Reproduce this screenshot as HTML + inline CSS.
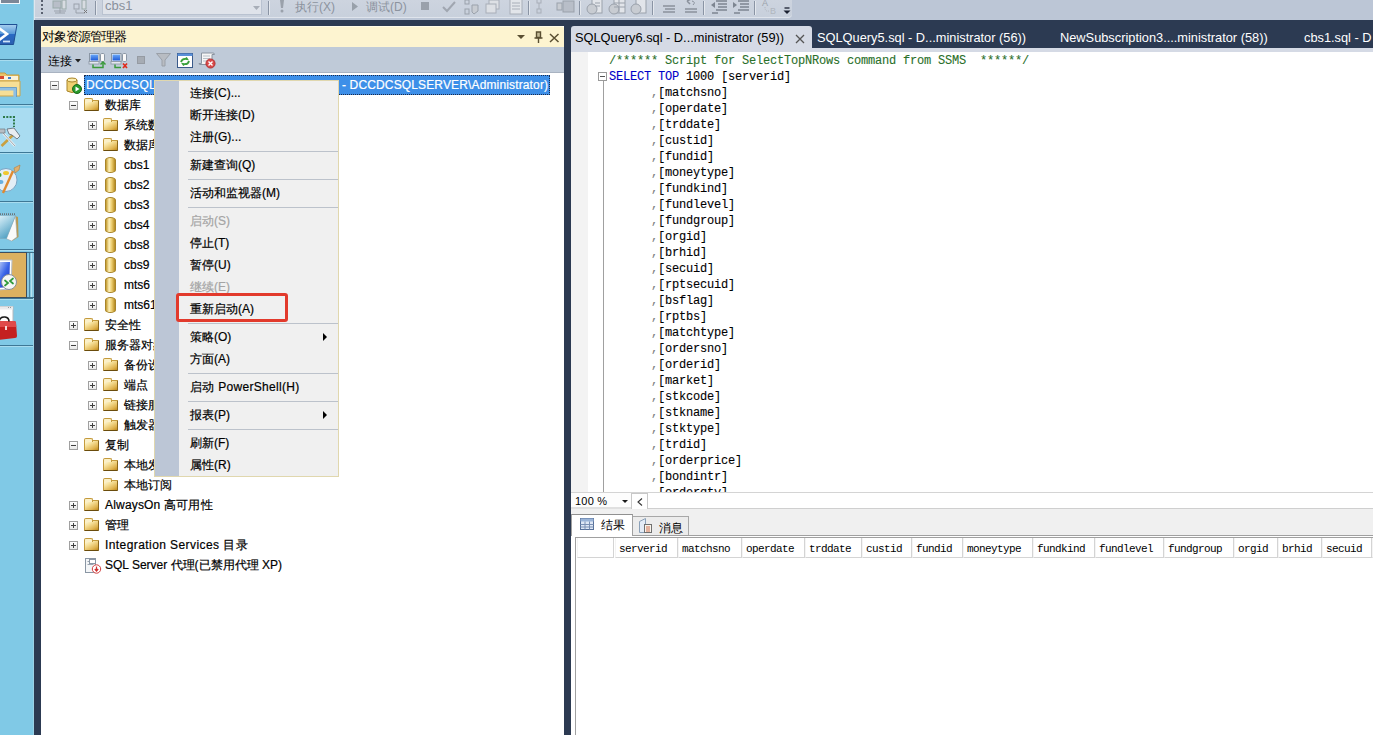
<!DOCTYPE html>
<html><head><meta charset="utf-8">
<style>
*{box-sizing:border-box;margin:0;padding:0}
html,body{width:1373px;height:735px;overflow:hidden;background:#2c3a52;font-family:"Liberation Sans",sans-serif;font-size:12px;color:#000}
.a{position:absolute}
svg{position:absolute;overflow:visible}
#taskbar{left:0;top:0;width:34px;height:735px;background:#80c9e6}
.tsep{position:absolute;left:0;width:34px;height:2px;background:#3e7896;border-bottom:1px solid #a8dcef}
#tray{left:34px;top:0;width:1339px;height:20px;background:#bcc6d6;border-left:1px solid #dfe6ee}
#tb{left:35px;top:0;width:757px;height:18px;background:linear-gradient(#cdd4df,#c8d0dc);border-bottom:1px solid #dfe4ec;border-radius:0 0 4px 0}
.tsp{position:absolute;top:1px;width:2px;height:14px;background:#8a94a4;border-right:1px solid #e4e8ee}
.gt{position:absolute;top:-1px;color:#8c939e;font-size:12px;white-space:nowrap}
#oe{left:41px;top:26px;width:523px;height:709px;background:#fff;overflow:hidden}
#oetitle{left:0;top:0;width:523px;height:21px;background:#fdf4d0;border-top:1px solid #fffbe8;border-radius:2px 2px 0 0}
#oetb{left:0;top:21px;width:523px;height:26px;background:#bfcad8;border-bottom:1px solid #a9b3c1}
#ed{left:571px;top:26px;width:802px;height:709px;overflow:hidden}
.tabtxt{color:#fff;top:4px;font-size:12.8px;white-space:nowrap}
.row{position:absolute;height:20px;line-height:20px;white-space:nowrap;font-size:12px;-webkit-text-stroke:0.2px}
.exp{position:absolute;width:9px;height:9px;border:1px solid #a0a0a0;background:linear-gradient(#fff,#e8e8e8)}
.exp:before{content:"";position:absolute;left:1px;top:3px;width:5px;height:1px;background:#404040}
.exp.p:after{content:"";position:absolute;left:3px;top:1px;width:1px;height:5px;background:#404040}
.fold{position:absolute;width:15px;height:11px;background:linear-gradient(150deg,#fffbe4 0%,#f6e09a 35%,#e0b450 75%,#c08a20 100%);border:1px solid #c49a3c;border-bottom-color:#6a4c0c;border-right-color:#8a661a;border-radius:1px}
.fold:before{content:"";position:absolute;left:-1px;top:-3px;width:7px;height:3px;background:#fbf0c8;border:1px solid #c49a3c;border-bottom:none;border-radius:2px 2px 0 0}
.db{position:absolute;width:11px;height:16px;border-radius:5.5px/3px;background:linear-gradient(90deg,#c39a2c,#fdf0b8 35%,#ebcb6c 65%,#b58a20);border:1px solid #a8842a}
.agent{position:absolute;width:16px;height:16px}
.mi{position:absolute;left:35px;height:22px;line-height:22px;white-space:nowrap;font-size:12px;-webkit-text-stroke:0.2px}
.mi.d{color:#a4a4a4}
.sep{position:absolute;left:33px;width:150px;height:1px;background:#bcc2cb}
.code{position:absolute;left:38px;font-family:"Liberation Mono",monospace;font-size:12px;line-height:16px;height:16px;white-space:pre;letter-spacing:-0.2px;-webkit-text-stroke:0.1px}
.kw{color:#0000c8}.cm{color:#2a702a}.gr{color:#808080}
.gh{position:absolute;top:0px;height:20px;line-height:23px;font-family:"Liberation Mono",monospace;font-size:11px;letter-spacing:-0.6px;border-left:1px solid #f4f4f4;border-right:1px solid #d4d4d4;border-bottom:1px solid #d4d4d4;padding-left:3px;white-space:nowrap;background:#fff;overflow:hidden;color:#000}
</style></head><body>

<div id="taskbar" class="a">
 <div class="a" style="left:0;top:0;width:20px;height:4px;background:#7d8796;border:1px solid #f4f8fb;border-top:none"></div>
 <div class="tsep" style="top:59px"></div>
 <div class="a" style="left:0;top:108px;width:34px;height:45px;background:#a9dcf1"></div>
 <div class="tsep" style="top:104px"></div>
 <div class="tsep" style="top:152px"></div>
 <div class="tsep" style="top:201px"></div>
 <div class="tsep" style="top:249px"></div>
 <div class="tsep" style="top:298px"></div>
 <div class="tsep" style="top:345px"></div>
 <div class="a" style="left:33px;top:0;width:1px;height:735px;background:#9cd2e6"></div>
 <!-- powershell -->
 <svg style="left:0;top:24px" width="20" height="22"><defs><linearGradient id="ps" x1="0" y1="0" x2="0" y2="1"><stop offset="0" stop-color="#a8d0f0"/><stop offset="0.45" stop-color="#5a9ad8"/><stop offset="0.5" stop-color="#2a6ac4"/><stop offset="1" stop-color="#2a5fb0"/></linearGradient></defs><path d="M-3 0.5 L17 0.5 L13.5 20.5 L-3 20.5 Z" fill="url(#ps)" stroke="#1e4f94"/><path d="M-1 4 L7 10 L-1 16" stroke="#fff" stroke-width="2.6" fill="none"/><path d="M3 17.5 L10 17.5" stroke="#cfe4f8" stroke-width="1.8"/></svg>
 <!-- explorer folder -->
 <svg style="left:0;top:71px" width="22" height="29"><path d="M-2 2 L5 2 L7 4 L19 4 L19 24 L-2 24Z" fill="#e9c36a" stroke="#c79d3e"/><rect x="-1" y="5" width="19" height="4" fill="#fbf3dc"/><rect x="0" y="5" width="4" height="3" fill="#d84a30"/><rect x="8" y="6" width="3" height="2" fill="#3a7ed0"/><path d="M-2 10 L20 10 L20 25 L-2 25Z" fill="#f6df96" stroke="#c9a44a"/><path d="M-2 18 L15 18 L15 26" stroke="#8ec0e4" stroke-width="3.2" fill="none"/><path d="M-2 16.5 L16.5 16.5 L16.5 26" stroke="#5a94c4" stroke-width="0.8" fill="none"/></svg>
 <!-- tools -->
 <svg style="left:0;top:114px" width="24" height="34"><path d="M3 3 L14 3 L14 13" stroke="#2e7a4a" stroke-width="2" stroke-dasharray="2,1.3" fill="none"/><path d="M1.5 32 L13 21" stroke="#c9a040" stroke-width="2.6"/><path d="M3 19 L15 32" stroke="#eef2f4" stroke-width="2.4"/><path d="M3 19 L15 32" stroke="#6a7480" stroke-width="0.6"/><path d="M-1 15 L5 15 L5 19 L-1 19Z" fill="#b8bec4" stroke="#707880" stroke-width="0.7"/><path d="M7 15 L14 14 L20 22 L17 25 L12 21 L9 20Z" fill="#e8ecf0" stroke="#5a6470" stroke-width="0.8"/></svg>
 <!-- paint -->
 <svg style="left:0;top:163px" width="22" height="33"><ellipse cx="6" cy="17" rx="11" ry="11.5" fill="#e4eef6" stroke="#7aa4c4"/><ellipse cx="6" cy="10" rx="3" ry="2" fill="#f0c830"/><ellipse cx="0" cy="12" rx="1.5" ry="2" fill="#40a040"/><ellipse cx="1" cy="19" rx="2.5" ry="2" fill="#6ab0e0"/><path d="M13 8 L3 30" stroke="#e08a30" stroke-width="2.4"/><path d="M14 5 L20 2 L19 7 L15 10Z" fill="#e0b070" stroke="#b08040" stroke-width="0.6"/></svg>
 <!-- notepad -->
 <svg style="left:0;top:211px" width="22" height="32"><defs><linearGradient id="np" x1="0" y1="0" x2="0.6" y2="1"><stop offset="0" stop-color="#e6f4fa"/><stop offset="0.4" stop-color="#a8d4e6"/><stop offset="1" stop-color="#4a9cc0"/></linearGradient></defs><path d="M15 5 L18 6 L18.5 26 L12 30Z" fill="#b89a50"/><path d="M15.5 4.5 L17 26 L11.5 30 L6 27.5Z" fill="#fafafa" stroke="#9aa4aa" stroke-width="0.6"/><path d="M-3 4.5 L15.5 4.5 L6.5 27.5 L-3 27.5Z" fill="url(#np)" stroke="#7aa8bc" stroke-width="0.6"/><path d="M-2 3.2 L15 3.2" stroke="#6a747c" stroke-width="1.8" stroke-dasharray="1,1"/></svg>
 <!-- rdp highlighted -->
 <div class="a" style="left:0;top:252px;width:27px;height:46px;background:#dcb160;border:1px solid #3e4e5e;border-left:none"></div>
 <div class="a" style="left:27px;top:252px;width:7px;height:46px;background:#88c8e2;border-top:1px solid #3e6e88;border-bottom:1px solid #3e6e88"></div>
 <div class="a" style="left:29px;top:253px;width:1px;height:44px;background:#4a86a4"></div>
 <div class="a" style="left:31px;top:253px;width:1px;height:44px;background:#b8e2f2"></div>
 <svg style="left:0;top:259px" width="22" height="34"><path d="M-3 1 L12 1 L11 30 L-3 31Z" fill="#fff" stroke="#b8c0cc"/><defs><linearGradient id="scr" x1="0" y1="0" x2="1" y2="1"><stop offset="0" stop-color="#c8d8f8"/><stop offset="0.5" stop-color="#3a64e8"/><stop offset="1" stop-color="#1a2ab0"/></linearGradient></defs><path d="M-3 3 L10 3 L9 28 L-3 29Z" fill="url(#scr)"/><circle cx="9" cy="23" r="7.5" fill="#f6f6f6" stroke="#8a9098"/><path d="M5 21.5 L8 24 L5 26.5 M13 19.5 L10 22 L13 24.5" stroke="#2e9a3a" stroke-width="1.7" stroke-linecap="round" fill="none"/></svg>
 <!-- toolbox -->
 <svg style="left:0;top:306px" width="22" height="36"><rect x="-2" y="0.5" width="15" height="16" fill="#fff" stroke="#b4b8bc"/><rect x="-2" y="0.5" width="15" height="3" fill="#e8eaec"/><path d="M8 1.5 L9 1.5 M10 1.5 L11 1.5" stroke="#999"/><path d="M-3 15 L14 15 Q16 15 16 17 L17 30 Q17 32 15 32 L-3 34Z" fill="#c42020"/><path d="M-3 15 L14 15 Q16 15 16 17 L16.3 21 L-3 21Z" fill="#e04a4a"/><rect x="5" y="20" width="2" height="4" fill="#f4d8d8"/><path d="M-1 15.5 Q0 10.5 5 11 Q9 11.5 9 15.5" stroke="#1a1a1a" stroke-width="1.6" fill="none"/></svg>
</div>

<div id="tray" class="a"></div>
<div id="tb" class="a">
 <div class="a" style="left:6px;top:0px;width:2px;height:14px;background:repeating-linear-gradient(#5a6170 0 2px,transparent 2px 4px)"></div>
 <svg style="left:17px;top:-1px" width="16" height="16"><rect x="1" y="2" width="8" height="7" fill="#b8bec8" stroke="#9aa"/><rect x="10" y="1" width="4" height="9" fill="#d8dce2" stroke="#9aa"/><path d="M2 12 L14 12 M8 9 L8 14 M3 14 L13 14" stroke="#9aa1ab"/></svg>
 <svg style="left:38px;top:-1px" width="16" height="16"><rect x="1" y="5" width="5" height="5" fill="none" stroke="#9aa1ab"/><rect x="9" y="1" width="4" height="9" fill="#d8dce2" stroke="#9aa"/><path d="M3 11 L3 14 L12 14" stroke="#9aa1ab" fill="none"/><path d="M11 11 L14 14 M14 11 L11 14" stroke="#777"/></svg>
 <div class="tsp" style="left:60px"></div>
 <div class="a" style="left:67px;top:-1px;width:160px;height:16px;border:1px solid #b9c2d0;background:#dfe3ea"><span class="a" style="left:2px;top:-2px;color:#8a919c;font-size:13px">cbs1</span><svg style="left:150px;top:6px" width="7" height="4"><path d="M0 0 L7 0 L3.5 4Z" fill="#a8aeb8"/></svg></div>
 <div class="tsp" style="left:233px"></div>
 <svg style="left:243px;top:-1px" width="8" height="14"><path d="M2 1 L6 1 L5 9 L3 9Z" fill="#9aa1ab"/><circle cx="4" cy="12" r="1.5" fill="#9aa1ab"/></svg>
 <span class="gt" style="left:260px">执行(X)</span>
 <svg style="left:316px;top:2px" width="8" height="10"><path d="M1 0 L7 4.5 L1 9Z" fill="#98a0aa"/></svg>
 <span class="gt" style="left:331px">调试(D)</span>
 <svg style="left:385px;top:1px" width="10" height="10"><rect x="1" y="1" width="8" height="8" fill="#9aa1ab"/></svg>
 <svg style="left:407px;top:1px" width="14" height="12"><path d="M1 6 L5 10 L13 1" stroke="#a0a6b0" stroke-width="2" fill="none"/></svg>
 <svg style="left:429px;top:-1px" width="16" height="16"><rect x="1" y="1" width="4" height="4" fill="none" stroke="#9aa1ab"/><rect x="1" y="10" width="4" height="5" fill="none" stroke="#9aa1ab"/><path d="M8 6 L14 6 L14 12 L10 15 L8 13Z" fill="#c8ccd2" stroke="#9aa1ab"/></svg>
 <svg style="left:450px;top:-1px" width="16" height="16"><rect x="4" y="1" width="10" height="9" fill="#dde0e5" stroke="#a8aeb8"/><rect x="1" y="5" width="10" height="9" fill="#dde0e5" stroke="#a8aeb8"/></svg>
 <svg style="left:473px;top:-2px" width="16" height="17"><rect x="2" y="1" width="12" height="15" fill="#e2e5ea" stroke="#a8aeb8"/><path d="M4 5 L12 5 M4 8 L12 8 M4 11 L12 11" stroke="#a8aeb8"/></svg>
 <div class="tsp" style="left:493px"></div>
 <svg style="left:501px;top:-2px" width="16" height="17"><rect x="1" y="1" width="4" height="4" fill="none" stroke="#a8aeb8"/><rect x="1" y="11" width="4" height="4" fill="none" stroke="#a8aeb8"/><path d="M3 5 L3 11" stroke="#a8aeb8"/></svg>
 <svg style="left:521px;top:-2px" width="20" height="17"><rect x="1" y="5" width="5" height="7" fill="#c8ccd2" stroke="#9aa1ab"/><rect x="7" y="3" width="11" height="11" fill="#b8bec8" stroke="#9aa1ab"/></svg>
 <div class="tsp" style="left:544px"></div>
 <svg style="left:551px;top:-2px" width="18" height="17"><rect x="6" y="1" width="10" height="14" fill="#e2e5ea" stroke="#9aa1ab"/><circle cx="6" cy="11" r="5" fill="#c8ccd2" stroke="#9aa1ab"/><path d="M9 5 L14 5 M9 8 L14 8" stroke="#9aa1ab"/></svg>
 <svg style="left:573px;top:-2px" width="18" height="17"><rect x="6" y="1" width="11" height="14" fill="#e2e5ea" stroke="#9aa1ab"/><circle cx="6" cy="11" r="5" fill="#c8ccd2" stroke="#9aa1ab"/><path d="M6 5 L17 5 M6 9 L17 9 M11 1 L11 15" stroke="#9aa1ab"/></svg>
 <svg style="left:595px;top:-2px" width="18" height="17"><rect x="6" y="1" width="10" height="14" fill="#e2e5ea" stroke="#9aa1ab"/><circle cx="6" cy="11" r="5" fill="#c8ccd2" stroke="#9aa1ab"/></svg>
 <div class="tsp" style="left:617px"></div>
 <svg style="left:625px;top:-2px" width="18" height="17"><path d="M3 1 L15 1 M3 8 L15 8 M5 11 L15 11 M3 14 L15 14" stroke="#8a919c" stroke-width="1.5"/></svg>
 <svg style="left:647px;top:-2px" width="18" height="17"><path d="M5 3 L9 1 M5 3 L8 6 M3 11 L15 11 M3 14 L15 14" stroke="#8a919c" stroke-width="1.5" fill="none"/><path d="M10 3 Q14 4 11 7" stroke="#8a919c" fill="none"/></svg>
 <div class="tsp" style="left:668px"></div>
 <svg style="left:675px;top:-1px" width="18" height="16"><path d="M6 2 L17 2 M8 5 L17 5 M8 8 L17 8 M6 11 L17 11 M2 14 L8 14" stroke="#7d8591" stroke-width="1.5"/><path d="M1 6 L5 3 L5 9Z" fill="#7d8591"/></svg>
 <svg style="left:697px;top:-1px" width="18" height="16"><path d="M6 2 L17 2 M8 5 L17 5 M8 8 L17 8 M6 11 L17 11 M2 14 L8 14" stroke="#7d8591" stroke-width="1.5"/><path d="M5 6 L1 3 L1 9Z" fill="#7d8591"/></svg>
 <div class="tsp" style="left:719px"></div>
 <svg style="left:726px;top:-2px" width="18" height="17"><text x="1" y="8" font-size="9" fill="#9aa1ab" font-family="Liberation Sans">A</text><text x="9" y="16" font-size="9" fill="#b0b6be" font-family="Liberation Sans">B</text><path d="M4 9 Q4 14 8 13" stroke="#b0b6be" stroke-dasharray="1,1" fill="none"/></svg>
 <svg style="left:748px;top:7px" width="8" height="8"><path d="M1.5 1 L6.5 1" stroke="#1a2030" stroke-width="1.3"/><path d="M0.5 3.5 L7.5 3.5 L4 7Z" fill="#1a2030"/></svg>
</div>

<div id="oe" class="a">
  <div id="oetitle" class="a">
    <span class="a" style="left:1px;top:1px;font-size:13px;letter-spacing:-1px">对象资源管理器</span>
    <svg style="left:476px;top:8px" width="8" height="4"><path d="M0 0 L8 0 L4 4Z" fill="#5a4f32"/></svg>
    <svg style="left:493px;top:4px" width="10" height="13"><path d="M2.5 1 L6.5 1 L6.5 6.5 L2.5 6.5Z" stroke="#5a4f32" stroke-width="1.4" fill="#5a4f32" fill-opacity="0.35"/><path d="M0.5 7 L8.5 7 M4.5 7 L4.5 12" stroke="#5a4f32" stroke-width="1.4" fill="none"/></svg>
    <svg style="left:508px;top:6px" width="11" height="10"><path d="M1 1 L9.5 9 M9.5 1 L1 9" stroke="#5a4f32" stroke-width="1.5"/></svg>
  </div>
  <div id="oetb" class="a">
    <span class="a" style="left:7px;top:6px;font-size:12px">连接</span>
    <svg style="left:34px;top:12px" width="6" height="4"><path d="M0 0 L6 0 L3 3.5Z" fill="#222"/></svg>
    <svg style="left:47px;top:5px" width="18" height="18"><defs><linearGradient id="scrn" x1="0" y1="0" x2="0" y2="1"><stop offset="0" stop-color="#6aa8f8"/><stop offset="1" stop-color="#1e5ad8"/></linearGradient></defs><rect x="1.5" y="1.5" width="9.5" height="8" fill="#f0f4f8" stroke="#8a96a4"/><rect x="2.5" y="2.5" width="7.5" height="6" fill="url(#scrn)"/><rect x="1" y="9.5" width="10" height="2.5" fill="#e4e8ee" stroke="#8a96a4" stroke-width="0.8"/><rect x="12.5" y="1.5" width="4" height="8" rx="1.2" fill="#fafafa" stroke="#8a96a4"/><path d="M5 12.5 L5 15.5 L15 15.5 L15 10" stroke="#3a9a3a" stroke-width="1.5" fill="none"/><path d="M12.5 12.5 L15 10 L17.5 12.5" stroke="#3a9a3a" stroke-width="1.5" fill="none"/></svg>
    <svg style="left:69px;top:5px" width="18" height="18"><rect x="1.5" y="1.5" width="9.5" height="8" fill="#f0f4f8" stroke="#8a96a4"/><rect x="2.5" y="2.5" width="7.5" height="6" fill="url(#scrn)"/><rect x="1" y="9.5" width="10" height="2.5" fill="#e4e8ee" stroke="#8a96a4" stroke-width="0.8"/><rect x="12.5" y="1.5" width="4" height="8" rx="1.2" fill="#fafafa" stroke="#8a96a4"/><path d="M5 12.5 L5 15.5 L11 15.5" stroke="#3a9a3a" stroke-width="1.5" fill="none"/><path d="M13 11.5 L17 16 M17 11.5 L13 16" stroke="#e02a1a" stroke-width="1.7"/></svg>
    <div class="a" style="left:96px;top:9px;width:8px;height:8px;background:#a6acb4;border:1px solid #959ba3"></div>
    <svg style="left:115px;top:6px" width="15" height="14"><path d="M0.5 0.5 L14.5 0.5 L9 7 L9 13 L6 13 L6 7Z" fill="#b8bcc2" stroke="#9aa0a8"/></svg>
    <svg style="left:136px;top:6px" width="17" height="16"><rect x="0.5" y="0.5" width="15" height="14" fill="#fff" stroke="#3a5a8a"/><rect x="0.5" y="0.5" width="15" height="2.5" fill="#5a90d8"/><path d="M4 9 Q5 5 10 6 L9 4.5 M12 8 Q11 12 6 11 L7 12.5" stroke="#3aa03a" stroke-width="1.8" fill="none"/></svg>
    <svg style="left:157px;top:4px" width="18" height="18"><path d="M3.5 2 L15 2 Q16.5 2 16.5 3.5 L14 3.5 L14 13.5 L2 13.5 Q1 13.5 1 12.5 L3.5 12.5Z" fill="#f6f6f6" stroke="#8a94a0"/><path d="M5 5 L12 5 M5 7.5 L12 7.5 M5 10 L10 10" stroke="#b8c0c8"/><circle cx="12.5" cy="12.5" r="4.6" fill="#d84a4a" stroke="#a82828" stroke-width="0.8"/><path d="M10.5 10.5 L14.5 14.5 M14.5 10.5 L10.5 14.5" stroke="#fff" stroke-width="1.4"/></svg>
  </div>
  <div class="a" style="left:43px;top:49px;width:466px;height:20px;background:#3d8fe8;border:1px dotted #1a2a4a"></div>
  <div class="row" style="left:45px;top:49px;color:#fff;letter-spacing:0.35px">DCCDCSQLSERVER (SQL Server 11.0.21</div>
  <div class="row" style="left:301px;top:49px;color:#fff;letter-spacing:0.14px">- DCCDCSQLSERVER\Administrator)</div>
  <svg style="left:25px;top:51px" width="16" height="17"><path d="M1 3 Q6 0 11 3 L11 14 Q6 17 1 14Z" fill="#f0d070" stroke="#a8842a"/><ellipse cx="6" cy="3" rx="5" ry="2" fill="#fbeeb0" stroke="#a8842a"/><circle cx="11" cy="12" r="4.5" fill="#2a9a2a" stroke="#1a6a1a"/><path d="M9.5 9.5 L13.5 12 L9.5 14.5Z" fill="#fff"/></svg>
<div class="exp" style="left:9px;top:55px"></div>
<div class="exp" style="left:28px;top:75px"></div>
<div class="fold" style="left:43px;top:74px"></div>
<div class="row" style="left:64px;top:69px">数据库</div>
<div class="exp p" style="left:47px;top:95px"></div>
<div class="fold" style="left:62px;top:94px"></div>
<div class="row" style="left:83px;top:89px">系统数据库</div>
<div class="exp p" style="left:47px;top:115px"></div>
<div class="fold" style="left:62px;top:114px"></div>
<div class="row" style="left:83px;top:109px">数据库快照</div>
<div class="exp p" style="left:47px;top:135px"></div>
<div class="db" style="left:64px;top:131px"></div>
<div class="row" style="left:83px;top:129px">cbs1</div>
<div class="exp p" style="left:47px;top:155px"></div>
<div class="db" style="left:64px;top:151px"></div>
<div class="row" style="left:83px;top:149px">cbs2</div>
<div class="exp p" style="left:47px;top:175px"></div>
<div class="db" style="left:64px;top:171px"></div>
<div class="row" style="left:83px;top:169px">cbs3</div>
<div class="exp p" style="left:47px;top:195px"></div>
<div class="db" style="left:64px;top:191px"></div>
<div class="row" style="left:83px;top:189px">cbs4</div>
<div class="exp p" style="left:47px;top:215px"></div>
<div class="db" style="left:64px;top:211px"></div>
<div class="row" style="left:83px;top:209px">cbs8</div>
<div class="exp p" style="left:47px;top:235px"></div>
<div class="db" style="left:64px;top:231px"></div>
<div class="row" style="left:83px;top:229px">cbs9</div>
<div class="exp p" style="left:47px;top:255px"></div>
<div class="db" style="left:64px;top:251px"></div>
<div class="row" style="left:83px;top:249px">mts6</div>
<div class="exp p" style="left:47px;top:275px"></div>
<div class="db" style="left:64px;top:271px"></div>
<div class="row" style="left:83px;top:269px">mts61</div>
<div class="exp p" style="left:28px;top:295px"></div>
<div class="fold" style="left:43px;top:294px"></div>
<div class="row" style="left:64px;top:289px">安全性</div>
<div class="exp" style="left:28px;top:315px"></div>
<div class="fold" style="left:43px;top:314px"></div>
<div class="row" style="left:64px;top:309px">服务器对象</div>
<div class="exp p" style="left:47px;top:335px"></div>
<div class="fold" style="left:62px;top:334px"></div>
<div class="row" style="left:83px;top:329px">备份设备</div>
<div class="exp p" style="left:47px;top:355px"></div>
<div class="fold" style="left:62px;top:354px"></div>
<div class="row" style="left:83px;top:349px">端点</div>
<div class="exp p" style="left:47px;top:375px"></div>
<div class="fold" style="left:62px;top:374px"></div>
<div class="row" style="left:83px;top:369px">链接服务器</div>
<div class="exp p" style="left:47px;top:395px"></div>
<div class="fold" style="left:62px;top:394px"></div>
<div class="row" style="left:83px;top:389px">触发器</div>
<div class="exp" style="left:28px;top:415px"></div>
<div class="fold" style="left:43px;top:414px"></div>
<div class="row" style="left:64px;top:409px">复制</div>
<div class="fold" style="left:62px;top:434px"></div>
<div class="row" style="left:83px;top:429px">本地发布</div>
<div class="fold" style="left:62px;top:454px"></div>
<div class="row" style="left:83px;top:449px">本地订阅</div>
<div class="exp p" style="left:28px;top:475px"></div>
<div class="fold" style="left:43px;top:474px"></div>
<div class="row" style="left:64px;top:469px;letter-spacing:0.18px">AlwaysOn 高可用性</div>
<div class="exp p" style="left:28px;top:495px"></div>
<div class="fold" style="left:43px;top:494px"></div>
<div class="row" style="left:64px;top:489px">管理</div>
<div class="exp p" style="left:28px;top:515px"></div>
<div class="fold" style="left:43px;top:514px"></div>
<div class="row" style="left:64px;top:509px;letter-spacing:0.42px">Integration Services 目录</div>
<svg style="left:44px;top:532px" width="17" height="16"><rect x="0.5" y="0.5" width="10" height="14" fill="#f4f6f8" stroke="#8a96a4"/><path d="M2.5 3.5 L8.5 3.5 M2.5 6.5 L8.5 6.5" stroke="#9aa4b0"/><rect x="4.5" y="1.5" width="6" height="4" fill="#fff" stroke="#8a96a4"/><circle cx="11.5" cy="11" r="4.2" fill="#fff" stroke="#d04040"/><path d="M11.5 8.5 L11.5 12.5 M9.8 11 L11.5 13 L13.2 11" stroke="#d03030" stroke-width="1.2" fill="none"/></svg>
<div class="row" style="left:64px;top:529px">SQL Server 代理(已禁用代理 XP)</div>
</div>

<div class="a" style="left:154px;top:80px;width:185px;height:397px;background:#f0f0f0;border:1px solid #e0d7ae">
  <div class="a" style="left:0;top:0;width:24px;height:395px;background:#bcc6d6"></div>
<div class="mi" style="top:1px">连接(C)...</div>
<div class="mi" style="top:23px">断开连接(D)</div>
<div class="mi" style="top:45px">注册(G)...</div>
<div class="sep" style="top:70px"></div>
<div class="mi" style="top:73px">新建查询(Q)</div>
<div class="sep" style="top:98px"></div>
<div class="mi" style="top:101px">活动和监视器(M)</div>
<div class="sep" style="top:126px"></div>
<div class="mi d" style="top:129px">启动(S)</div>
<div class="mi" style="top:151px">停止(T)</div>
<div class="mi" style="top:173px">暂停(U)</div>
<div class="mi d" style="top:195px">继续(E)</div>
<div class="mi" style="top:217px">重新启动(A)</div>
<div class="sep" style="top:242px"></div>
<div class="mi" style="top:245px">策略(O)</div>
<svg style="left:168px;top:252px" width="5" height="8"><path d="M0 0 L4 4 L0 8Z" fill="#000"/></svg>
<div class="mi" style="top:267px">方面(A)</div>
<div class="sep" style="top:292px"></div>
<div class="mi" style="top:295px;letter-spacing:0.3px">启动 PowerShell(H)</div>
<div class="sep" style="top:320px"></div>
<div class="mi" style="top:323px">报表(P)</div>
<svg style="left:168px;top:330px" width="5" height="8"><path d="M0 0 L4 4 L0 8Z" fill="#000"/></svg>
<div class="sep" style="top:348px"></div>
<div class="mi" style="top:351px">刷新(F)</div>
<div class="mi" style="top:373px">属性(R)</div>
  <div class="a" style="left:21px;top:212px;width:112px;height:29px;border:3px solid #e23a2c;border-radius:3px"></div>
</div>

<div id="ed" class="a">
  <div class="a" style="left:0;top:0;width:241px;height:26px;background:#d5dae5;border-radius:3px 3px 0 0"></div>
  <span class="a" style="left:4px;top:4px;font-size:12.8px;white-space:nowrap">SQLQuery6.sql - D...ministrator (59))</span>
  <svg style="left:224px;top:8px" width="10" height="10"><path d="M1 1 L9 9 M9 1 L1 9" stroke="#555" stroke-width="1.3"/></svg>
  <span class="a tabtxt" style="left:246px">SQLQuery5.sql - D...ministrator (56))</span>
  <span class="a tabtxt" style="left:489px">NewSubscription3....ministrator (58))</span>
  <span class="a tabtxt" style="left:733px">cbs1.sql - D</span>
  <div class="a" style="left:0;top:22px;width:802px;height:4px;background:#d5dae5"></div>
  <div class="a" style="left:0;top:26px;width:802px;height:441px;background:#fff;overflow:hidden">
    <div class="a" style="left:0;top:0;width:17px;height:441px;background:#f3f3f3"></div>
    <div class="a" style="left:27px;top:20px;width:9px;height:9px;border:1px solid #9a9a9a;background:#fff"><div class="a" style="left:1px;top:3px;width:5px;height:1px;background:#555"></div></div>
    <div class="a" style="left:32px;top:29px;width:1px;height:420px;background:#a0a0a0"></div>
<div class="code" style="top:1px"><span class="cm">/****** Script for SelectTopNRows command from SSMS  ******/</span></div>
<div class="code" style="top:17px"><span class="kw">SELECT</span> <span class="kw">TOP</span> 1000 [serverid]</div>
<div class="code" style="top:33px">      <span class="gr">,</span>[matchsno]</div>
<div class="code" style="top:49px">      <span class="gr">,</span>[operdate]</div>
<div class="code" style="top:65px">      <span class="gr">,</span>[trddate]</div>
<div class="code" style="top:81px">      <span class="gr">,</span>[custid]</div>
<div class="code" style="top:97px">      <span class="gr">,</span>[fundid]</div>
<div class="code" style="top:113px">      <span class="gr">,</span>[moneytype]</div>
<div class="code" style="top:129px">      <span class="gr">,</span>[fundkind]</div>
<div class="code" style="top:145px">      <span class="gr">,</span>[fundlevel]</div>
<div class="code" style="top:161px">      <span class="gr">,</span>[fundgroup]</div>
<div class="code" style="top:177px">      <span class="gr">,</span>[orgid]</div>
<div class="code" style="top:193px">      <span class="gr">,</span>[brhid]</div>
<div class="code" style="top:209px">      <span class="gr">,</span>[secuid]</div>
<div class="code" style="top:225px">      <span class="gr">,</span>[rptsecuid]</div>
<div class="code" style="top:241px">      <span class="gr">,</span>[bsflag]</div>
<div class="code" style="top:257px">      <span class="gr">,</span>[rptbs]</div>
<div class="code" style="top:273px">      <span class="gr">,</span>[matchtype]</div>
<div class="code" style="top:289px">      <span class="gr">,</span>[ordersno]</div>
<div class="code" style="top:305px">      <span class="gr">,</span>[orderid]</div>
<div class="code" style="top:321px">      <span class="gr">,</span>[market]</div>
<div class="code" style="top:337px">      <span class="gr">,</span>[stkcode]</div>
<div class="code" style="top:353px">      <span class="gr">,</span>[stkname]</div>
<div class="code" style="top:369px">      <span class="gr">,</span>[stktype]</div>
<div class="code" style="top:385px">      <span class="gr">,</span>[trdid]</div>
<div class="code" style="top:401px">      <span class="gr">,</span>[orderprice]</div>
<div class="code" style="top:417px">      <span class="gr">,</span>[bondintr]</div>
<div class="code" style="top:433px">      <span class="gr">,</span>[orderqty]</div>
  </div>
  <!-- zoom bar -->
  <div class="a" style="left:0;top:466px;width:802px;height:1px;background:#d4d4d4"></div>
  <div class="a" style="left:0;top:467px;width:802px;height:16px;background:#fff;border-bottom:1px solid #cfcfcf"></div>
  <div class="a" style="left:0;top:467px;width:60px;height:16px;background:#fdfdfd;border-bottom:2px solid #e0e0e0"><span class="a" style="left:4px;top:2px;font-size:11px;letter-spacing:0.2px">100 %</span><svg style="left:51px;top:7px" width="6" height="3"><path d="M0 0 L6 0 L3 3Z" fill="#1a1a1a"/></svg></div>
  <div class="a" style="left:60px;top:467px;width:17px;height:17px;background:#fff;border:1px solid #c8c8c8"><svg style="left:5px;top:4px" width="6" height="8"><path d="M5 0.5 L1 4 L5 7.5" stroke="#333" stroke-width="1.1" fill="none"/></svg></div>
  <!-- results tabs -->
  <div class="a" style="left:0;top:483px;width:802px;height:27px;background:#f0f0f0"></div>
  <div class="a" style="left:61px;top:490px;width:57px;height:20px;background:#ececec;border:1px solid #a8a8a8"></div>
  <div class="a" style="left:61px;top:509px;width:741px;height:1px;background:#a0a0a0"></div>
  <div class="a" style="left:0;top:488px;width:62px;height:23px;background:#fff;border:1px solid #a0a0a0;border-bottom:none;border-top-color:#909090"></div>
  <svg style="left:9px;top:492px" width="15" height="13"><rect x="0.5" y="0.5" width="13" height="11" fill="#dfe8f6" stroke="#56709a"/><rect x="0.5" y="0.5" width="13" height="3" fill="#9ab4d8"/><path d="M0.5 6.5 L13.5 6.5 M0.5 9 L13.5 9 M5 3.5 L5 11.5 M9.5 3.5 L9.5 11.5" stroke="#7a90b4"/></svg>
  <span class="a" style="left:30px;top:491px;font-size:12px">结果</span>
  <svg style="left:67px;top:492px" width="16" height="16"><path d="M1.5 3.5 L7.5 0.5 L7.5 14.5 L1.5 14.5Z" fill="#e4ecf6" stroke="#8aa0b8"/><rect x="6.5" y="6.5" width="7" height="8" fill="#f8f4ec" stroke="#707070"/><path d="M8 9 L12 9 M8 11 L12 11 M8 13 L12 13" stroke="#d07050"/></svg>
  <span class="a" style="left:88px;top:494px;font-size:12px">消息</span>
  <!-- grid -->
  <div class="a" style="left:0;top:510px;width:802px;height:199px;background:#fff"></div>
  <div class="a" style="left:4px;top:511px;width:798px;height:220px;border:1px solid #a0a0a0;border-right:none;background:#fff">
<div class="gh" style="left:1px;width:37px"></div>
<div class="gh" style="left:39px;width:63px">serverid</div>
<div class="gh" style="left:102px;width:64px">matchsno</div>
<div class="gh" style="left:166px;width:63px">operdate</div>
<div class="gh" style="left:229px;width:57px">trddate</div>
<div class="gh" style="left:286px;width:50px">custid</div>
<div class="gh" style="left:336px;width:51px">fundid</div>
<div class="gh" style="left:387px;width:70px">moneytype</div>
<div class="gh" style="left:457px;width:62px">fundkind</div>
<div class="gh" style="left:519px;width:69px">fundlevel</div>
<div class="gh" style="left:588px;width:70px">fundgroup</div>
<div class="gh" style="left:658px;width:44px">orgid</div>
<div class="gh" style="left:702px;width:44px">brhid</div>
<div class="gh" style="left:746px;width:50px">secuid</div>
<div class="gh" style="left:796px;width:29px"></div>
  </div>
</div>
</body></html>
